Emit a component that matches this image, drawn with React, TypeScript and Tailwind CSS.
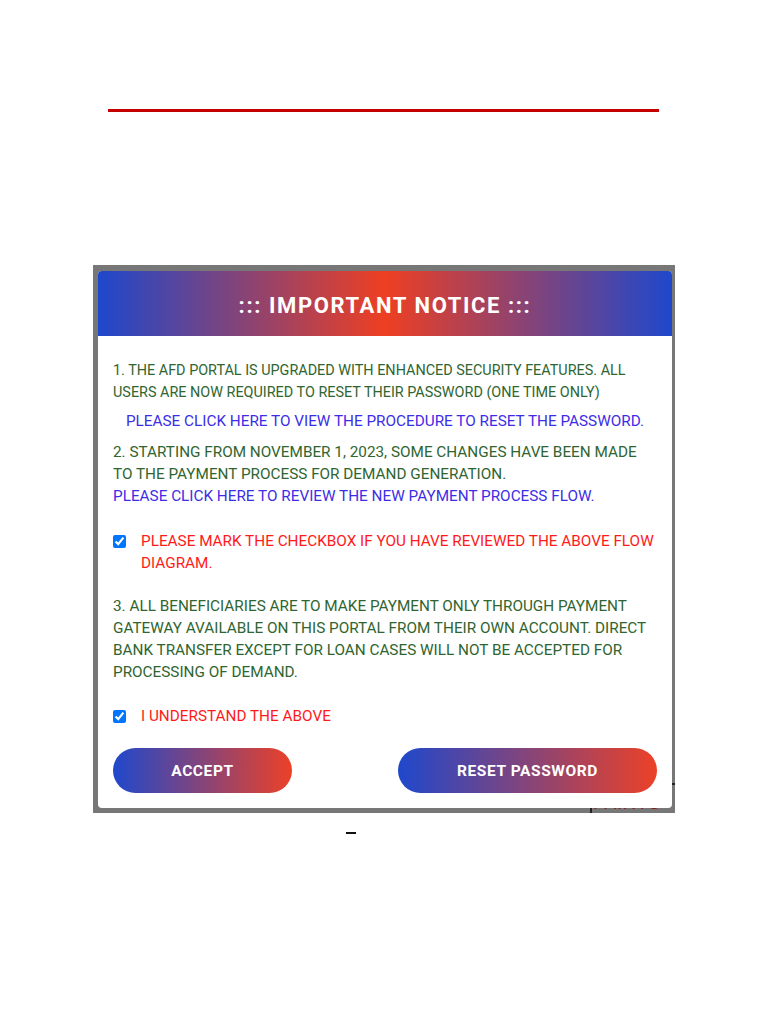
import { useState } from "react";

const NoticeModal = () => {
  const [reviewed, setReviewed] = useState<boolean>(true);
  const [understood, setUnderstood] = useState<boolean>(true);

  return (
    <div className="relative mt-[153px] ml-[93px] w-[582px] h-[548px] bg-[#777777] pt-[6px] pl-[5px] overflow-hidden">
      {/* bits of the page behind the backdrop */}
      <div className="absolute left-[497px] top-[518px] w-[2px] h-[30px] bg-[#222222]" />
      <div className="absolute left-[577px] top-[518px] w-[5px] h-[2px] bg-[#222222]" />
      <div className="absolute left-[500px] top-[529px] text-[19px] leading-[18px] text-[#8a1f1f] tracking-[0.5px] whitespace-nowrap">
        PAINTS
      </div>

      <div className="relative w-[574px] h-[537px] bg-white rounded-[4px] flex flex-col">
        <div className="h-[65px] pt-[3px] rounded-t-[4px] bg-[linear-gradient(to_right,#1e48cc,#ee3f22_50%,#1e48cc)] flex items-center justify-center">
          <h1 className="text-white font-bold text-[22px] tracking-[1.6px]">::: IMPORTANT NOTICE :::</h1>
        </div>

        <div className="px-[15px] pt-[24px] text-[15.3px] leading-[22px] text-[#2f6530]">
          <p className="text-[14.4px]">1. THE AFD PORTAL IS UPGRADED WITH ENHANCED SECURITY FEATURES. ALL USERS ARE NOW REQUIRED TO RESET THEIR PASSWORD (ONE TIME ONLY)</p>
          <p className="mt-[6px] text-center text-[#3d2ee6] cursor-pointer">PLEASE CLICK HERE TO VIEW THE PROCEDURE TO RESET THE PASSWORD.</p>
          <p className="mt-[9px]">
            2. STARTING FROM NOVEMBER 1, 2023, SOME CHANGES HAVE BEEN MADE TO THE PAYMENT PROCESS FOR DEMAND GENERATION.
            <br />
            <span className="text-[#3d2ee6] cursor-pointer">PLEASE CLICK HERE TO REVIEW THE NEW PAYMENT PROCESS FLOW.</span>
          </p>

          <label className="mt-[23px] flex items-start gap-[15px] text-[#ff1a1a]">
            <input type="checkbox" checked={reviewed} onChange={(e) => setReviewed(e.target.checked)} className="mt-[5px] w-[13px] h-[13px] shrink-0" />
            <span>PLEASE MARK THE CHECKBOX IF YOU HAVE REVIEWED THE ABOVE FLOW DIAGRAM.</span>
          </label>

          <p className="mt-[21px]">3. ALL BENEFICIARIES ARE TO MAKE PAYMENT ONLY THROUGH PAYMENT GATEWAY AVAILABLE ON THIS PORTAL FROM THEIR OWN ACCOUNT. DIRECT BANK TRANSFER EXCEPT FOR LOAN CASES WILL NOT BE ACCEPTED FOR PROCESSING OF DEMAND.</p>

          <label className="mt-[22px] flex items-start gap-[15px] text-[#ff1a1a]">
            <input type="checkbox" checked={understood} onChange={(e) => setUnderstood(e.target.checked)} className="mt-[5px] w-[13px] h-[13px] shrink-0" />
            <span>I UNDERSTAND THE ABOVE</span>
          </label>

          <div className="mt-[21px] flex justify-between">
            <button className="w-[179px] h-[45px] rounded-full bg-[linear-gradient(to_right,#1f48cc,#ec4127)] text-white font-bold text-[15.5px] tracking-[0.6px]">
              ACCEPT
            </button>
            <button className="w-[259px] h-[45px] rounded-full bg-[linear-gradient(to_right,#1f48cc,#ec4127)] text-white font-bold text-[15.5px] tracking-[0.6px]">
              RESET PASSWORD
            </button>
          </div>
        </div>
      </div>
    </div>
  );
};

export default function App() {
  return (
    <div className="w-full min-h-screen bg-white font-['Roboto',sans-serif] overflow-hidden">
      <div className="mt-[109px] ml-[108px] w-[551px] h-[3px] bg-[#c40000]" />
      <NoticeModal />
      <div className="mt-[19px] ml-[346px] w-[10px] h-[2px] bg-[#111111]" />
    </div>
  );
}
